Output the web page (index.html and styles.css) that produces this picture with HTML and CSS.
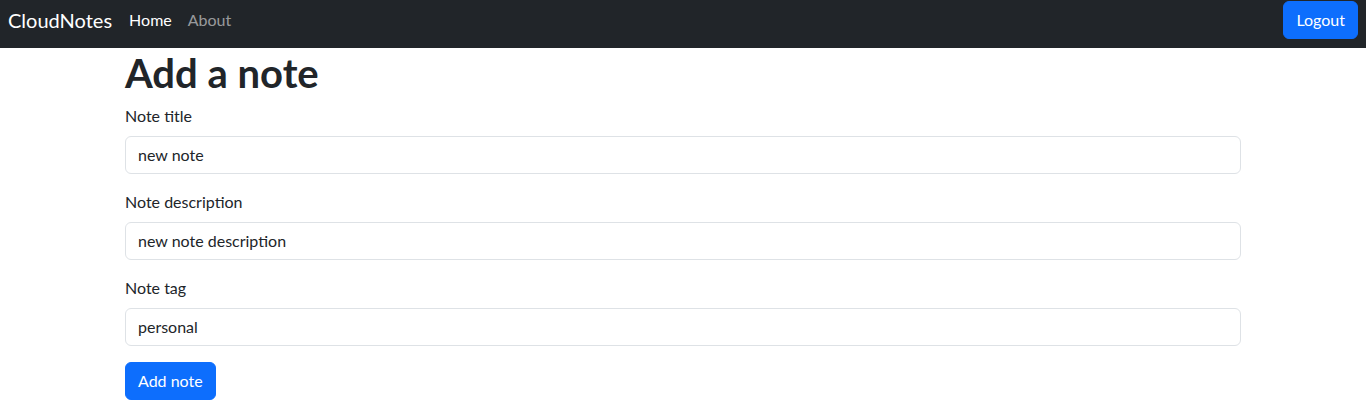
FILE: index.html
```html
<!DOCTYPE html>
<html lang="en">
<head>
  <meta charset="UTF-8" />
  <meta name="viewport" content="width=device-width, initial-scale=1" />
  <title>CloudNotes</title>
  <link rel="stylesheet" href="styles.css">
</head>
<body>

  <nav class="navbar">
    <div class="nav-left">
      <a href="/" class="brand">CloudNotes</a>
      <a href="/" class="nav-link active">Home</a>
      <a href="/about" class="nav-link">About</a>
    </div>
    <button type="button" class="btn">Logout</button>
  </nav>

  <main class="container">
    <h1>Add a note</h1>
    <form class="note-form" autocomplete="off">
      <div class="field">
        <label for="title">Note title</label>
        <input type="text" id="title" name="title" value="new note" />
      </div>
      <div class="field">
        <label for="description">Note description</label>
        <input type="text" id="description" name="description" value="new note description" />
      </div>
      <div class="field">
        <label for="tag">Note tag</label>
        <input type="text" id="tag" name="tag" value="personal" />
      </div>
      <button type="submit" class="btn">Add note</button>
    </form>
  </main>

</body>
</html>
```

FILE: styles.css
```css
/* Reset and base */
* {
  box-sizing: border-box;
}
body {
  margin: 0;
  font-family: Lato, 'Noto Sans', sans-serif;
  font-size: 16px;
  line-height: 1.5;
  color: #212529;
  background: #fff;
}
a {
  text-decoration: none;
}

/* Navbar */
.navbar {
  background: #212529;
  height: 48px;
  padding: 0 8px 8px;
  display: flex;
  align-items: center;
  justify-content: space-between;
}
.nav-left {
  display: flex;
  align-items: center;
}
.brand {
  color: #fff;
  font-size: 20px;
  margin-right: 9px;
}
.nav-link {
  color: rgba(255, 255, 255, 0.55);
  padding: 8px;
}
.nav-link.active {
  color: #fff;
}

/* Buttons */
.btn {
  font-family: inherit;
  font-size: 16px;
  line-height: 1.5;
  color: #fff;
  background: #0d6efd;
  border: 1px solid #0d6efd;
  border-radius: 6px;
  padding: 6px 12px;
  cursor: pointer;
}

/* Content */
.container {
  max-width: 1140px;
  margin: 0 auto;
  padding: 0 12px;
}
h1 {
  margin: 0 0 8px;
  padding-top: 2px;
  font-size: 40px;
  font-weight: 700;
  line-height: 1.15;
}
.field {
  margin-bottom: 16px;
}
label {
  display: block;
  margin-bottom: 8px;
}
input[type="text"] {
  display: block;
  width: 100%;
  padding: 6px 12px;
  font-family: inherit;
  font-size: 16px;
  line-height: 1.5;
  color: #212529;
  border: 1px solid #dee2e6;
  border-radius: 6px;
  background: #fff;
}
```
